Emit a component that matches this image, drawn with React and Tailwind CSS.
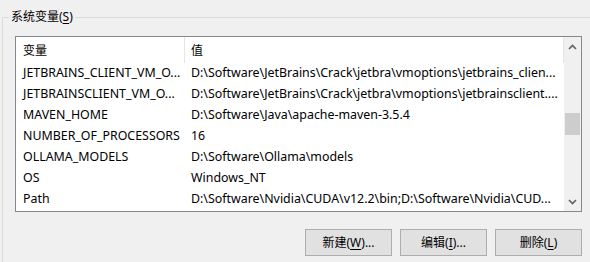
import React from 'react';

const rows = [
  ['JETBRAINS_CLIENT_VM_O...', 'D:\\Software\\JetBrains\\Crack\\jetbra\\vmoptions\\jetbrains_clien...'],
  ['JETBRAINSCLIENT_VM_O...', 'D:\\Software\\JetBrains\\Crack\\jetbra\\vmoptions\\jetbrainsclient....'],
  ['MAVEN_HOME', 'D:\\Software\\Java\\apache-maven-3.5.4'],
  ['NUMBER_OF_PROCESSORS', '16'],
  ['OLLAMA_MODELS', 'D:\\Software\\Ollama\\models'],
  ['OS', 'Windows_NT'],
  ['Path', 'D:\\Software\\Nvidia\\CUDA\\v12.2\\bin;D:\\Software\\Nvidia\\CUD...'],
];

function Chevron({ up }) {
  return (
    <svg width="9" height="6" viewBox="0 0 9 6">
      <path d={up ? 'M1 5 L4.5 1.5 L8 5' : 'M1 1 L4.5 4.5 L8 1'} fill="none" stroke="#606060" strokeWidth="1.6" />
    </svg>
  );
}

function Btn({ pre, key1, post }) {
  return (
    <button className="w-[87px] h-[27px] bg-[#e1e1e1] border border-[#adadad] text-[12px] text-black flex items-center justify-center">
      {pre}(<span className="underline underline-offset-2">{key1}</span>){post}
    </button>
  );
}

export default function App() {
  return (
    <div
      className="w-[590px] h-[262px] bg-[#f0f0f0] overflow-hidden text-black"
      style={{ fontFamily: '"Noto Sans", "Noto Sans CJK SC", sans-serif' }}
    >
      <div className="relative mt-[17px] ml-[2px] w-[620px] h-[260px] border-t border-l border-[#dcdcdc] pl-[12px] pt-[18px]">
        <div className="absolute -top-[10px] left-[6px] px-[2px] bg-[#f0f0f0] text-[12px] leading-[18px]">
          系统变量(<span className="underline underline-offset-2">S</span>)
        </div>

        <div className="w-[567px] h-[176px] bg-white border border-[#828790] flex text-[12.4px]">
          <div className="flex-1 flex flex-col overflow-hidden">
            <div className="h-[26px] flex items-center shrink-0 text-[12px]">
              <div className="w-[169px] pl-[7px] h-full flex items-center border-r border-[#e5e5e5]" style={{ fontFamily: '"Noto Sans CJK SC", sans-serif' }}>变量</div>
              <div className="flex-1 pl-[6px] h-full flex items-center border-r border-[#e5e5e5]" style={{ fontFamily: '"Noto Sans CJK SC", sans-serif' }}>值</div>
            </div>
            {rows.map(([k, v]) => (
              <div key={k} className="h-[21px] flex items-center shrink-0 whitespace-nowrap">
                <div className="w-[170px] pl-[7px] overflow-hidden">{k}</div>
                <div className="flex-1 pl-[5px] overflow-hidden">{v}</div>
              </div>
            ))}
          </div>
          <div className="w-[17px] bg-[#f0f0f0] flex flex-col">
            <div className="h-[17px] flex items-center justify-center pt-[3px]">
              <Chevron up />
            </div>
            <div className="flex-1">
              <div className="mt-[59px] mx-[1px] h-[22px] bg-[#cdcdcd]" />
            </div>
            <div className="h-[17px] flex items-center justify-center pb-[1px]">
              <Chevron />
            </div>
          </div>
        </div>

        <div className="w-[567px] mt-[17px] flex justify-end gap-[8px]">
          <Btn pre="新建" key1="W" post="..." />
          <Btn pre="编辑" key1="I" post="..." />
          <Btn pre="删除" key1="L" post="" />
        </div>
      </div>
    </div>
  );
}
